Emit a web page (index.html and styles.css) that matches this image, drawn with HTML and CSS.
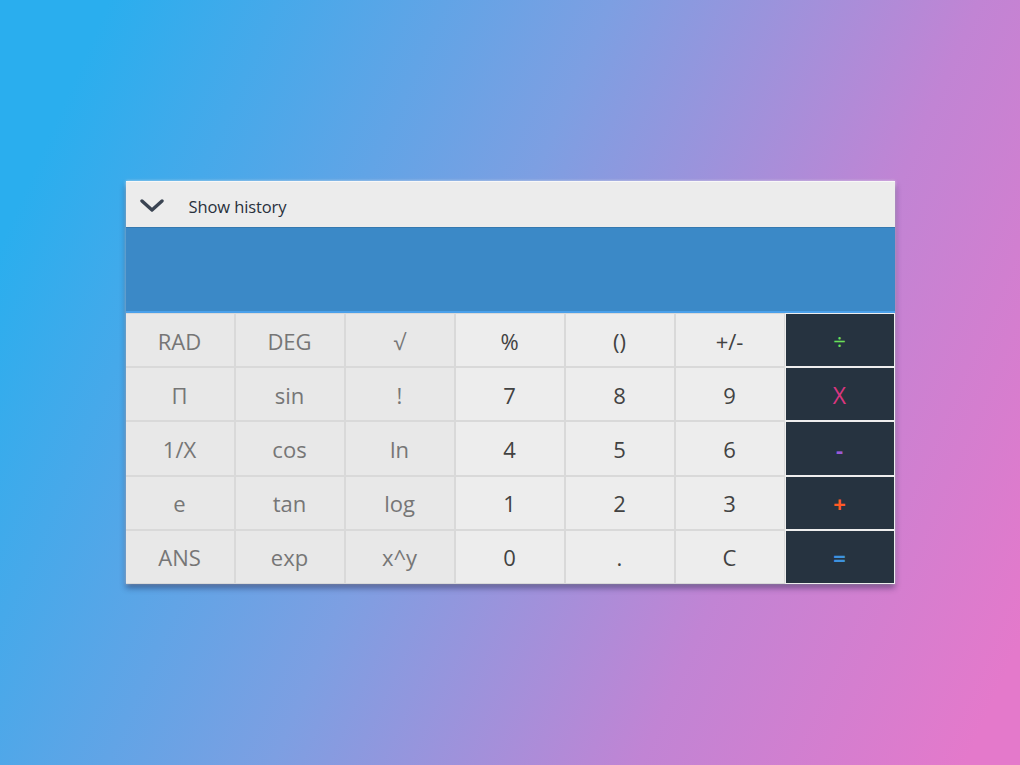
FILE: index.html
```html
<!DOCTYPE html>
<html lang="en">
<head>
<meta charset="utf-8">
<title>Calculator</title>
<link rel="stylesheet" href="styles.css">
</head>
<body>
<div class="calc">
  <div class="header">
    <svg class="chevron" width="24" height="14" viewBox="0 0 24 14"><path d="M2 2 L12 11 L22 2" fill="none" stroke="#3a4452" stroke-width="3.4" stroke-linecap="round" stroke-linejoin="round"/></svg>
    <span class="history">Show history</span>
  </div>
  <div class="display"></div>
  <div class="keys">
    <div class="key fn">RAD</div><div class="key fn">DEG</div><div class="key fn">√</div><div class="key num">%</div><div class="key num">()</div><div class="key num">+/-</div><div class="key op div">÷</div>
    <div class="key fn">Π</div><div class="key fn">sin</div><div class="key fn">!</div><div class="key num">7</div><div class="key num">8</div><div class="key num">9</div><div class="key op mul">X</div>
    <div class="key fn">1/X</div><div class="key fn">cos</div><div class="key fn">ln</div><div class="key num">4</div><div class="key num">5</div><div class="key num">6</div><div class="key op sub">-</div>
    <div class="key fn">e</div><div class="key fn">tan</div><div class="key fn">log</div><div class="key num">1</div><div class="key num">2</div><div class="key num">3</div><div class="key op add">+</div>
    <div class="key fn">ANS</div><div class="key fn">exp</div><div class="key fn">x^y</div><div class="key num">0</div><div class="key num">.</div><div class="key num">C</div><div class="key op eq">=</div>
  </div>
</div>
</body>
</html>
```
FILE: styles.css
```css
html, body {
  margin: 0;
  padding: 0;
}
body {
  width: 1020px;
  height: 765px;
  background: linear-gradient(114deg, #2aaeee 8%, #7d9fe2 45%, #c184d4 72%, #e479cb 96%);
  display: flex;
  align-items: center;
  justify-content: center;
  font-family: "Open Sans", "Liberation Sans", sans-serif;
}
.calc {
  width: 769px;
  height: 403px;
  display: flex;
  flex-direction: column;
  background: #e9e9e9;
  box-shadow: 0 4px 6px rgba(20, 20, 60, 0.45), 0 0 3px rgba(255, 255, 255, 0.7);
}
.header {
  height: 46px;
  box-sizing: border-box;
  border-top: 1px solid #f8f8f8;
  background: #ececec;
  display: flex;
  align-items: center;
  padding-left: 14px;
  padding-top: 3px;
}
.history {
  margin-left: 25px;
  font-size: 16.5px;
  color: #29313c;
  letter-spacing: -0.1px;
}
.display {
  height: 86px;
  box-sizing: border-box;
  background: #3b89c7;
  border-top: 1px solid #3579b0;
  border-bottom: 2px solid #4aa0ea;
}
.keys {
  flex: 1;
  display: grid;
  grid-template-columns: repeat(7, 1fr);
  grid-template-rows: repeat(5, 1fr);
  gap: 2px;
  padding: 1px 1px 1px 0;
  background: #d9d9d9;
}
.key {
  display: flex;
  align-items: center;
  justify-content: center;
  font-size: 22px;
  padding-top: 1px;
}
.fn {
  background: #e8e8e8;
  color: #767676;
}
.num {
  background: #ededed;
  color: #424242;
}
.op {
  background: #263340;
  font-size: 22px;
  box-shadow: 0 0 0 1px #eeeeee;
}
.div { color: #6be05a; }
.mul { color: #d9367f; font-size: 23px; }
.sub { color: #9a5ad6; font-weight: 700; }
.add { color: #ff5a26; font-weight: 700; }
.eq { color: #3d92de; font-weight: 700; }
```
